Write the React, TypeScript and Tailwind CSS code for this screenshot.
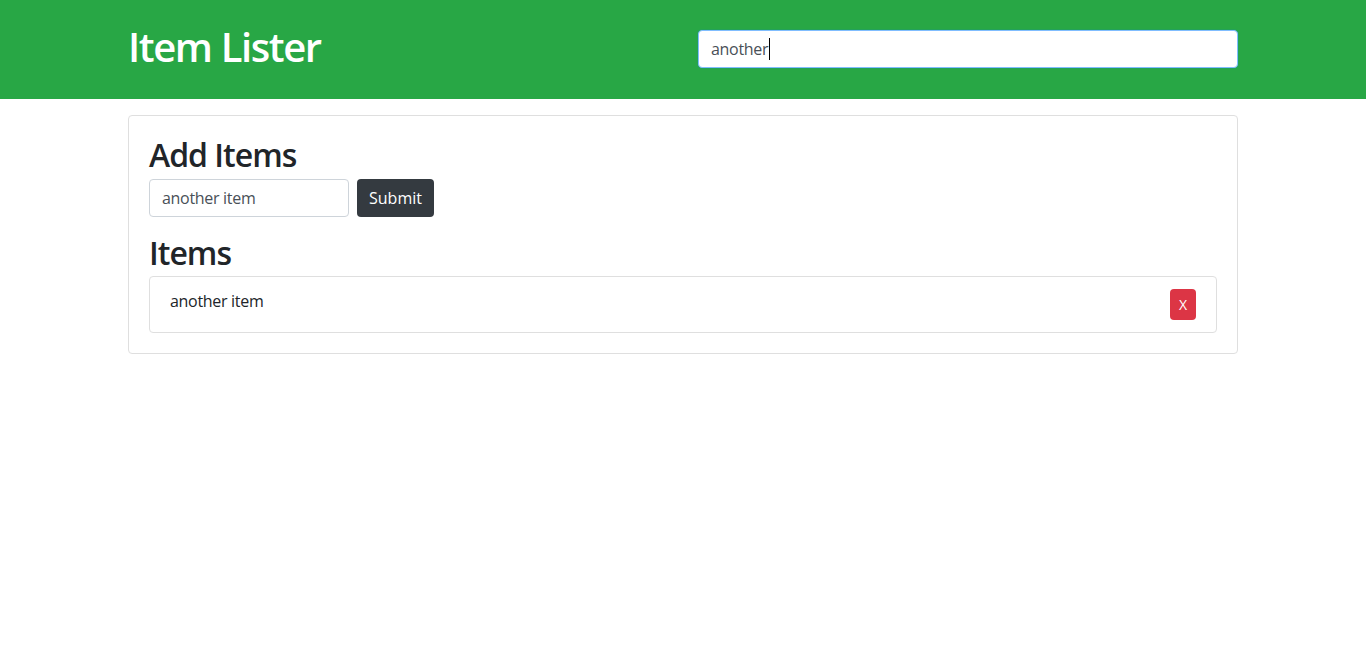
import { useState } from 'react'

const font = { fontFamily: '"Open Sans", "Noto Sans", sans-serif' }

export default function App() {
  const [items] = useState(['another item'])

  return (
    <div className="min-h-[658px] bg-white text-[#212529]" style={font}>
      {/* Header */}
      <header className="h-[99px] bg-[#28a745]">
        <div className="mx-auto flex h-full w-[1110px] items-center">
          <div className="w-[570px]">
            <h1 className="-mt-[6px] text-[40px] font-semibold leading-[48px] tracking-[-1.4px] text-white">
              Item Lister
            </h1>
          </div>
          <div className="-mt-[2px] flex w-[540px]">
            <div className="flex h-[38px] w-full items-center rounded border border-[#80bdff] bg-white px-3 text-base text-[#495057] shadow-[0_0_0_1px_rgba(0,123,255,0.12)]">
              <span className="tracking-[-0.3px]">another</span>
              <span className="ml-px h-[22px] w-px bg-black" />
            </div>
          </div>
        </div>
      </header>

      {/* Card */}
      <main className="mx-auto mt-4 w-[1110px] rounded border border-[#dfdfdf] p-5">
        <h2 className="text-[32px] font-semibold leading-[38px] tracking-[-1px]">Add Items</h2>
        <form className="mt-[5px] flex gap-2" onSubmit={(e) => e.preventDefault()}>
          <div className="flex h-[38px] w-[200px] items-center rounded border border-[#ced4da] px-3 text-base text-[#495057]">
            <span className="tracking-[-0.3px]">another item</span>
          </div>
          <button
            type="submit"
            className="h-[38px] rounded bg-[#343a40] px-3 text-base text-white"
          >
            Submit
          </button>
        </form>

        <h2 className="mt-[17px] text-[32px] font-semibold leading-[38px] tracking-[-1px]">Items</h2>
        <ul className="mt-1 rounded border border-[#dfdfdf]">
          {items.map((item) => (
            <li key={item} className="flex items-start justify-between px-5 py-3">
              <span className="text-base leading-6 tracking-[-0.3px]">{item}</span>
              <button className="h-[31px] w-[26px] rounded bg-[#dc3545] text-sm leading-[21px] text-white">
                X
              </button>
            </li>
          ))}
        </ul>
      </main>
    </div>
  )
}
